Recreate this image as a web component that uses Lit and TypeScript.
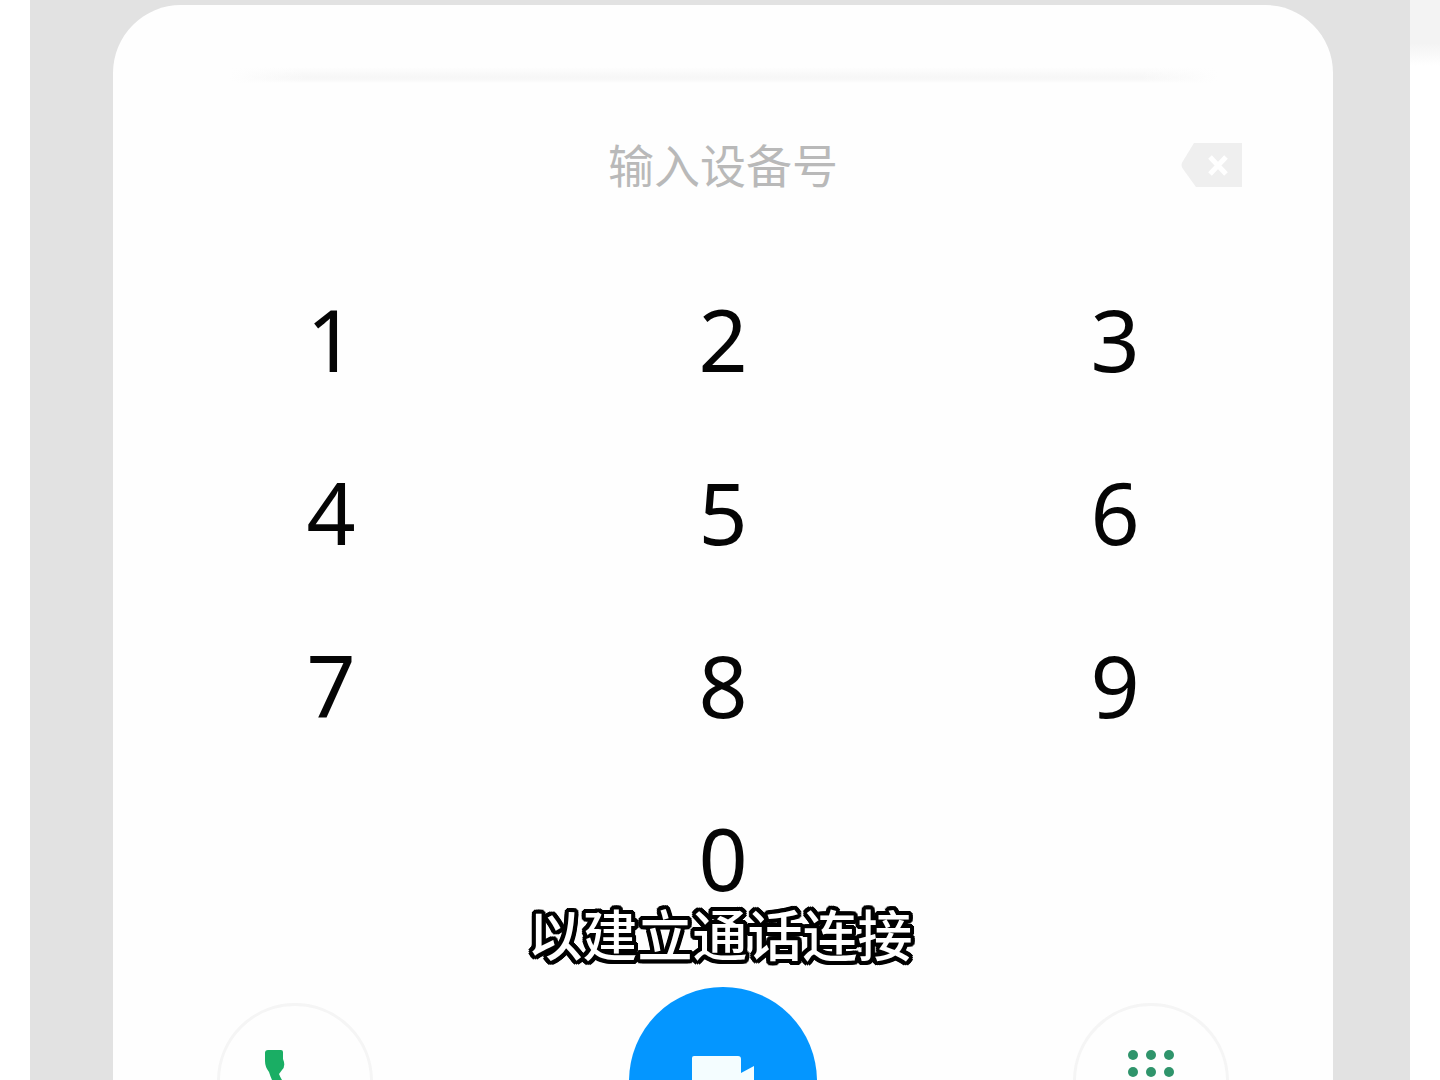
import { LitElement, html, svg, css } from "lit";
import { customElement, state } from "lit/decorators.js";

const KEYS = ["1", "2", "3", "4", "5", "6", "7", "8", "9", "0"];

function dot(x: number, y: number) {
  return svg`<circle cx=${x} cy=${y} r="5" />`;
}

@customElement("dial-pad")
export class DialPad extends LitElement {
  static styles = css`
    :host {
      display: block;
    }
    .grid {
      display: grid;
      grid-template-columns: repeat(3, 1fr);
      grid-auto-rows: 173px;
      padding: 0 22px;
    }
    .key {
      border: 0;
      padding: 0;
      background: none;
      color: #050505;
      font: 450 86px/116px "Noto Sans", "Open Sans", sans-serif;
      cursor: pointer;
    }
    .key:last-child {
      grid-column: 2;
    }
  `;

  private press(key: string) {
    this.dispatchEvent(new CustomEvent("dial", { detail: key }));
  }

  render() {
    return html`<div class="grid">
      ${KEYS.map(
        (k) => html`<button class="key" type="button" @click=${() => this.press(k)}>${k}</button>`
      )}
    </div>`;
  }
}

@customElement("app-root")
export class AppRoot extends LitElement {
  static styles = css`
    :host {
      display: block;
      height: 100vh;
      overflow: hidden;
      background: #fff;
      font-family: "Noto Sans", "Noto Sans CJK SC", sans-serif;
    }
    .page {
      position: relative;
      display: grid;
      grid-template-columns: 30px 1fr 30px;
      height: 100%;
    }
    .edge {
      grid-column: 3;
      grid-row: 1;
      height: 66px;
      background: linear-gradient(#f3f3f3 65%, #fff);
    }
    .stage {
      grid-column: 2;
      grid-row: 1;
      min-width: 0;
      padding: 5px 77px 0 83px;
      background: #e2e2e2;
    }
    .card {
      display: flex;
      flex-direction: column;
      border-radius: 68px 68px 0 0;
      background: #fefefe;
    }
    .handle {
      height: 16px;
      margin: 62px 116px 0;
      background: linear-gradient(90deg, #fefefe, transparent 8%, transparent 92%, #fefefe),
        linear-gradient(#fefefe, #f7f7f7 60%, #f8f8f8 80%, #fefefe);
    }
    .entry {
      display: grid;
      grid-template-columns: 62px 1fr 62px;
      align-items: center;
      height: 60px;
      margin: 52px 90px 0;
    }
    .number {
      grid-column: 2;
      align-self: start;
      min-width: 0;
      height: 56px;
      box-sizing: border-box;
      border: 0;
      padding: 0;
      outline: 0;
      background: none;
      color: #333;
      text-align: center;
      font: 400 46px/56px "Noto Sans CJK SC", sans-serif;
    }
    .number::placeholder {
      color: #b9b9b9;
      opacity: 1;
    }
    .icon-button {
      display: flex;
      align-items: center;
      justify-content: center;
      border: 0;
      padding: 0;
      background: none;
      cursor: pointer;
    }
    dial-pad {
      margin-top: 57px;
    }
    .actions {
      display: flex;
      align-items: center;
      justify-content: space-between;
      margin-top: 43px;
      padding: 0 104px;
    }
    .round {
      width: 156px;
      height: 156px;
      box-sizing: border-box;
      border: 3px solid #f5f5f5;
      border-radius: 50%;
      background: #fefefe;
    }
    .video {
      width: 188px;
      height: 188px;
      border: 0;
      background: #0496ff;
    }
    svg {
      display: block;
    }
    .caption {
      position: absolute;
      bottom: 108px;
      left: 0;
      right: 0;
      margin: 0;
      color: #fff;
      text-align: center;
      font: 500 55px/80px "Noto Sans CJK SC", sans-serif;
      text-shadow: 4px 0 #000, -4px 0 #000, 0 4px #000, 0 -4px #000, 3px 3px #000, -3px 3px #000,
        3px -3px #000, -3px -3px #000, 4px 2px #000, 4px -2px #000, -4px 2px #000, -4px -2px #000,
        2px 4px #000, -2px 4px #000, 2px -4px #000, -2px -4px #000, 2px 2px #000, -2px -2px #000,
        2px -2px #000, -2px 2px #000;
      pointer-events: none;
    }
  `;

  @state() private number = "";

  render() {
    return html`
      <div class="page">
        <main class="stage">
          <section class="card">
            <div class="handle"></div>
            <div class="entry">
              <input
                class="number"
                type="tel"
                aria-label="输入设备号"
                placeholder="输入设备号"
                .value=${this.number}
                @input=${(e: Event) => (this.number = (e.target as HTMLInputElement).value)}
              />
              <button
                class="icon-button"
                type="button"
                aria-label="删除"
                @click=${() => (this.number = this.number.slice(0, -1))}
              >
                <svg width="62" height="44" viewBox="0 0 62 44">
                  <path d="M13 0H61V44H15L2 26Q-1 22 2 18Z" fill="#efefef" />
                  <path d="M29 14L45 31M45 14L29 31" stroke="#fff" stroke-width="5" />
                </svg>
              </button>
            </div>
            <dial-pad @dial=${(e: CustomEvent) => (this.number += e.detail)}></dial-pad>
            <div class="actions">
              <button class="icon-button round" type="button" aria-label="语音通话">
                <svg width="64" height="64" viewBox="0 0 64 64">
                  <path
                    d="M2 4Q2 1 5 1H18Q20 1 20 3V10Q23 17 19 21L16 25Q22 40 38 47L42 43Q44 41 47 42L58 46Q61 47 61 50V59Q61 62 57 62Q34 60 17 43Q10 36 6 23Q2 18 2 12Z"
                    fill="#1aae64"
                  />
                </svg>
              </button>
              <button class="icon-button round video" type="button" aria-label="视频通话">
                <svg width="64" height="52" viewBox="0 0 64 52">
                  <path d="M1 3Q1 1 3 1H47Q50 1 50 4V18L63 11V41L50 34V48Q50 51 47 51H4Q1 51 1 48Z" fill="#f4fdff" />
                </svg>
              </button>
              <button class="icon-button round" type="button" aria-label="键盘">
                <svg width="52" height="62" viewBox="0 0 52 62" fill="#2f946b">
                  ${[8, 26, 44].map((x) => [4, 21, 38, 55].map((y) => dot(x, y + 1)))}
                </svg>
              </button>
            </div>
          </section>
        </main>
        <div class="edge"></div>
        <p class="caption">以建立通话连接</p>
      </div>
    `;
  }
}
